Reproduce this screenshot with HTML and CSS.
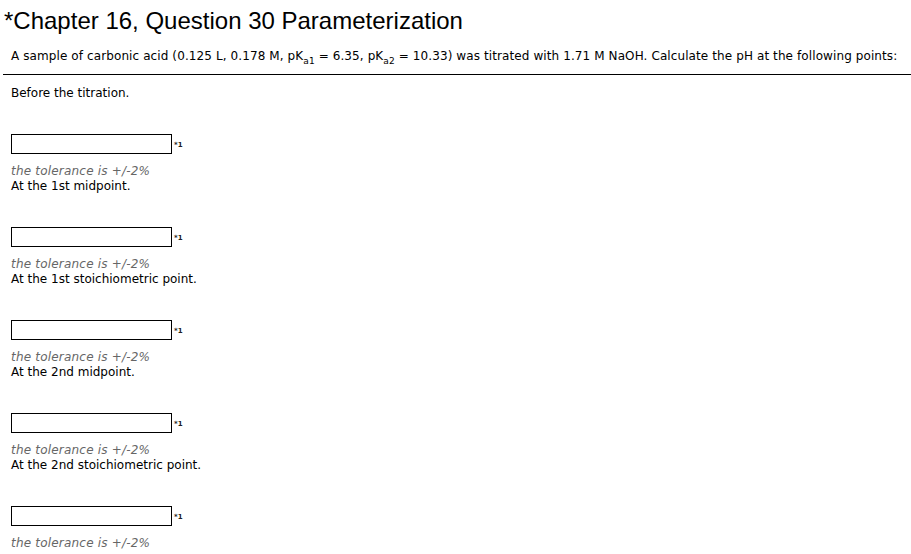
FILE: index.html
```html
<!DOCTYPE html>
<html>
<head>
<meta charset="utf-8">
<link rel="stylesheet" href="styles.css">
</head>
<body>
<h1 class="title">*Chapter 16, Question 30 Parameterization</h1>
<div class="question">
  <p class="intro">A sample of carbonic acid (0.125 L, 0.178 M, pK<sub>a1</sub> = 6.35, pK<sub>a2</sub> = 10.33) was titrated with 1.71 M NaOH. Calculate the pH at the following points:</p>
  <hr class="rule">
  <div class="parts">
    <div class="part">
      <div class="label">Before the titration.</div>
      <div class="answer"><span class="box"></span><span class="mark">*1</span></div>
      <div class="tol">the tolerance is +/-2%</div>
    </div>
    <div class="part">
      <div class="label">At the 1st midpoint.</div>
      <div class="answer"><span class="box"></span><span class="mark">*1</span></div>
      <div class="tol">the tolerance is +/-2%</div>
    </div>
    <div class="part">
      <div class="label">At the 1st stoichiometric point.</div>
      <div class="answer"><span class="box"></span><span class="mark">*1</span></div>
      <div class="tol">the tolerance is +/-2%</div>
    </div>
    <div class="part">
      <div class="label">At the 2nd midpoint.</div>
      <div class="answer"><span class="box"></span><span class="mark">*1</span></div>
      <div class="tol">the tolerance is +/-2%</div>
    </div>
    <div class="part">
      <div class="label">At the 2nd stoichiometric point.</div>
      <div class="answer"><span class="box"></span><span class="mark">*1</span></div>
      <div class="tol">the tolerance is +/-2%</div>
    </div>
  </div>
</div>
</body>
</html>
```
FILE: styles.css
```css
html, body {
  margin: 0;
  padding: 0;
  background: #fff;
}
body {
  font-family: "DejaVu Sans", Verdana, sans-serif;
  font-size: 12px;
  color: #000;
  overflow: hidden;
}
.title {
  font-family: "Liberation Sans", Arial, sans-serif;
  font-weight: normal;
  font-size: 24px;
  line-height: 26px;
  margin: 0;
  padding: 8px 0 0 4px;
  color: #000;
}
.question {
  padding-left: 3px;
}
.intro {
  margin: 15px 0 0 8px;
  line-height: 15px;
  white-space: nowrap;
  letter-spacing: 0.1px;
}
.intro sub {
  font-size: 9px;
  vertical-align: -4px;
  line-height: 0;
}
.rule {
  border: 0;
  border-top: 1px solid #000;
  margin: 10px 0 0 0;
  height: 0;
}
.parts {
  display: flex;
  flex-direction: column;
  padding: 11px 0 0 8px;
}
.part {
  display: flex;
  flex-direction: column;
  line-height: 15px;
}
.label {
  height: 15px;
}
.answer {
  display: flex;
  align-items: flex-end;
  margin-top: 33px;
  height: 20px;
}
.box {
  display: block;
  width: 159px;
  height: 18px;
  border: 1px solid #000;
  background: #fff;
}
.mark {
  font-size: 7px;
  line-height: 8px;
  margin: 0 0 5px 2px;
  font-weight: bold;
  color: #222;
}
.tol {
  margin-top: 10px;
  font-style: italic;
  color: #666;
  height: 15px;
  letter-spacing: 0.2px;
}
```
